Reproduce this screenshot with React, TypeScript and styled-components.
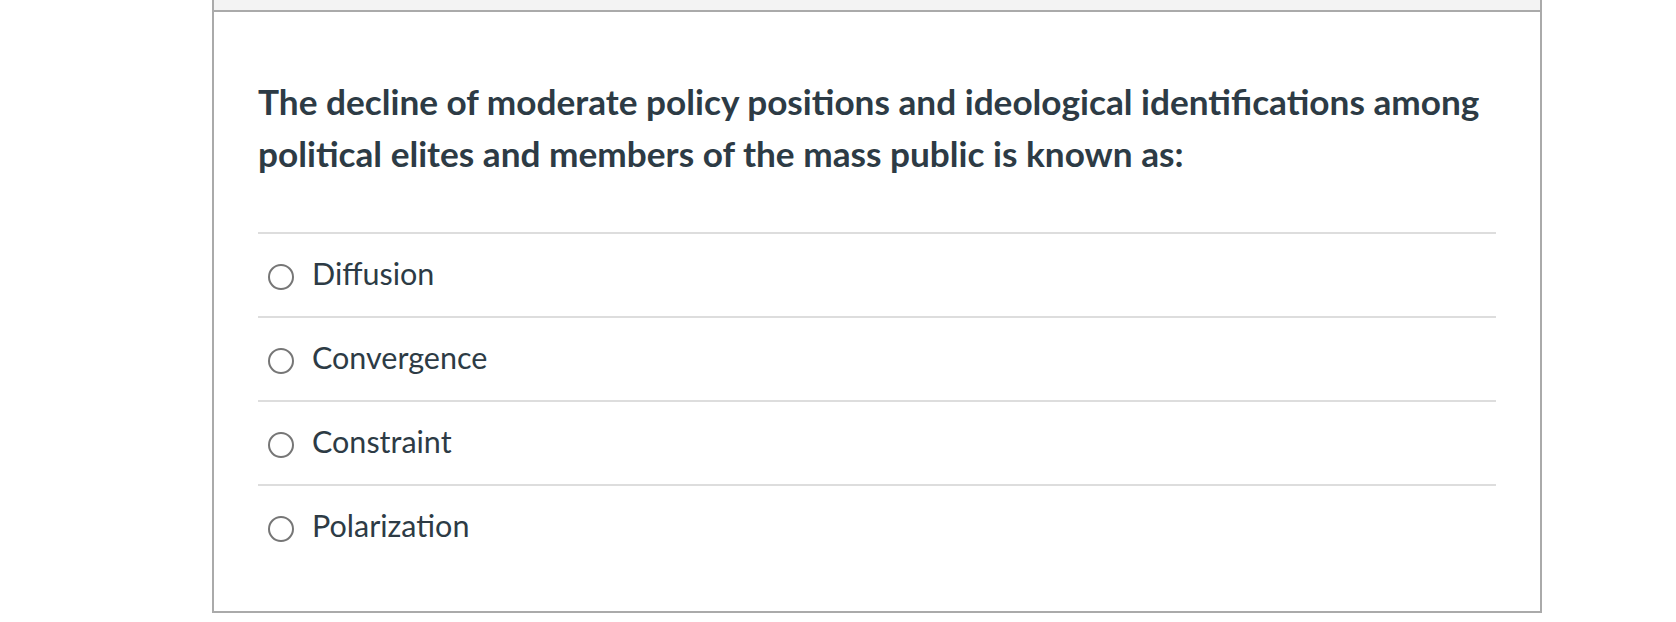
import React, { useState } from 'react'
import styled, { createGlobalStyle } from 'styled-components'

const GlobalStyle = createGlobalStyle`
  html, body {
    margin: 0;
    padding: 0;
    background: #ffffff;
  }
  body {
    font-family: Lato, "Liberation Sans", Arial, sans-serif;
    color: #2d3b45;
  }
`

const Page = styled.div`
  padding: 0 134px 9px 212px;
`

const QuestionBox = styled.div`
  width: 1330px;
  box-sizing: border-box;
  border: 2px solid #aaaaaa;
  border-top: none;
  background: #ffffff;
`

const Header = styled.div`
  height: 10px;
  background: #f3f3f3;
  border-bottom: 2px solid #aaaaaa;
`

const Body = styled.div`
  padding: 63px 44px 43px 44px;
`

const QuestionText = styled.div`
  font-size: 35.2px;
  font-weight: 700;
  line-height: 52px;
  color: #2d3b45;
  margin-bottom: 53px;
`

const Answers = styled.div`
  display: flex;
  flex-direction: column;
`

const AnswerRow = styled.label`
  display: flex;
  align-items: center;
  border-top: 2px solid #dddddd;
  padding: 17.5px 0 22.5px 10px;
  cursor: pointer;
`

const Radio = styled.span<{ checked: boolean }>`
  width: 26px;
  height: 26px;
  box-sizing: border-box;
  border-radius: 50%;
  border: 2px solid #767676;
  margin-top: 9px;
  flex-shrink: 0;
  display: flex;
  align-items: center;
  justify-content: center;
  &::after {
    content: '';
    width: 12px;
    height: 12px;
    border-radius: 50%;
    background: ${(p) => (p.checked ? '#2d3b45' : 'transparent')};
  }
`

const AnswerText = styled.span`
  font-size: 30.5px;
  font-weight: 400;
  line-height: 42px;
  margin-left: 18px;
  color: #2d3b45;
`

const answers = ['Diffusion', 'Convergence', 'Constraint', 'Polarization']

const App = () => {
  const [picked, setPicked] = useState<string | null>(null)
  return (
    <>
      <GlobalStyle />
      <Page>
        <QuestionBox>
          <Header />
          <Body>
            <QuestionText>
              The decline of moderate policy positions and ideological identifications among
              political elites and members of the mass public is known as:
            </QuestionText>
            <Answers>
              {answers.map((a) => (
                <AnswerRow key={a} onClick={() => setPicked(a)}>
                  <Radio checked={picked === a} />
                  <AnswerText>{a}</AnswerText>
                </AnswerRow>
              ))}
            </Answers>
          </Body>
        </QuestionBox>
      </Page>
    </>
  )
}

export default App
